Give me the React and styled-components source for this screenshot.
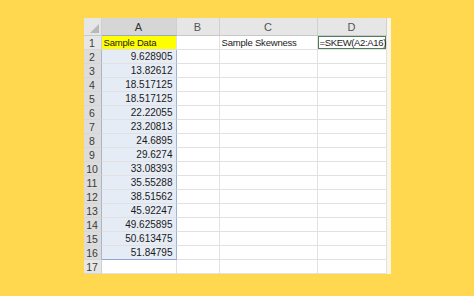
import React from 'react';
import styled, { createGlobalStyle } from 'styled-components';

const GlobalStyle = createGlobalStyle`
  html, body {
    margin: 0;
    padding: 0;
    background: #ffd84f;
  }
  body {
    font-family: "Liberation Sans", Arial, sans-serif;
  }
`;

const Page = styled.div`
  width: 474px;
  height: 296px;
  display: flex;
  justify-content: center;
  align-items: flex-start;
  padding-top: 18px;
  box-sizing: border-box;
`;

const Sheet = styled.div`
  display: grid;
  grid-template-columns: 18px 75px 43px 98px 69px 4px;
  grid-template-rows: 18px repeat(17, 14px);
  background: #ffffff;
  color: #1a1a1a;
`;

const Corner = styled.div`
  position: relative;
  background: #e6e6e6;
  border-right: 1px solid #d0d0d0;
  border-bottom: 1px solid #c8c8c8;
  box-sizing: border-box;

  svg {
    position: absolute;
    right: 2px;
    bottom: 2px;
  }
`;

const ColHead = styled.div`
  background: ${p => (p.$active ? '#d6d6d6' : '#e6e6e6')};
  border-right: 1px solid #d0d0d0;
  border-bottom: 1px solid ${p => (p.$active ? '#9aa9bf' : '#c8c8c8')};
  box-sizing: border-box;
  display: flex;
  align-items: center;
  justify-content: center;
  font-size: 11px;
  color: ${p => (p.$active ? '#333' : '#555')};
`;

const RowHead = styled.div`
  background: ${p => (p.$active ? '#dcdcdc' : '#e6e6e6')};
  border-right: 1px solid ${p => (p.$active ? '#a9b6c9' : '#cfcfcf')};
  border-bottom: 1px solid #d6d6d6;
  box-sizing: border-box;
  display: flex;
  align-items: center;
  justify-content: center;
  font-size: 10.5px;
  color: #3a3a3a;
`;

const Cell = styled.div`
  background: ${p => p.$fill || '#ffffff'};
  border-right: 1px solid ${p => p.$edgeRight || '#e1e1e1'};
  border-bottom: 1px solid ${p => p.$edgeBottom || '#e1e1e1'};
  box-shadow: ${p => (p.$current ? 'inset 0 0 0 1px #4e7d5e' : 'none')};
  box-sizing: border-box;
  display: flex;
  align-items: center;
  justify-content: ${p => (p.$num ? 'flex-end' : 'flex-start')};
  padding: 0 ${p => (p.$num ? '3px' : '0')} 0 ${p => (p.$num ? '0' : '2px')};
  font-size: ${p => (p.$num ? '10px' : '9.5px')};
  letter-spacing: ${p => (p.$tight ? '-0.35px' : p.$num ? '0' : '-0.2px')};
  white-space: nowrap;
  overflow: visible;
`;

const Gutter = styled.div`
  background: #fbf7e8;
`;

const cols = ['A', 'B', 'C', 'D'];

const data = [
  '9.628905', '13.82612', '18.517125', '18.517125', '22.22055',
  '23.20813', '24.6895', '29.6274', '33.08393', '35.55288',
  '38.51562', '45.92247', '49.625895', '50.613475', '51.84795'
];

const App = () => {
  const rows = Array.from({ length: 17 }, (_, i) => i + 1);

  return (
    <Page>
      <GlobalStyle />
      <Sheet>
        <Corner>
          <svg width="9" height="9" viewBox="0 0 9 9">
            <path d="M9 0 L9 9 L0 9 Z" fill="#b9b9b9" />
          </svg>
        </Corner>
        {cols.map(c => (
          <ColHead key={c} $active={c === 'A'}>{c}</ColHead>
        ))}
        <Gutter />

        {rows.map(r => {
          const inSel = r >= 2 && r <= 16;
          const value = inSel ? data[r - 2] : '';
          return (
            <React.Fragment key={r}>
              <RowHead $active={inSel}>{r}</RowHead>
              {r === 1 ? (
                <Cell $fill="#ffff00">Sample Data</Cell>
              ) : (
                <Cell
                  $num
                  $fill={inSel ? '#e6ecf5' : undefined}
                  $edgeRight={inSel ? '#9fb4d6' : undefined}
                  $edgeBottom={r === 16 ? '#8ea7d2' : undefined}
                >
                  {value}
                </Cell>
              )}
              <Cell />
              <Cell>{r === 1 ? 'Sample Skewness' : ''}</Cell>
              <Cell $current={r === 1} $tight={r === 1}>
                {r === 1 ? '=SKEW(A2:A16)' : ''}
              </Cell>
              <Gutter />
            </React.Fragment>
          );
        })}
      </Sheet>
    </Page>
  );
};

export default App;
